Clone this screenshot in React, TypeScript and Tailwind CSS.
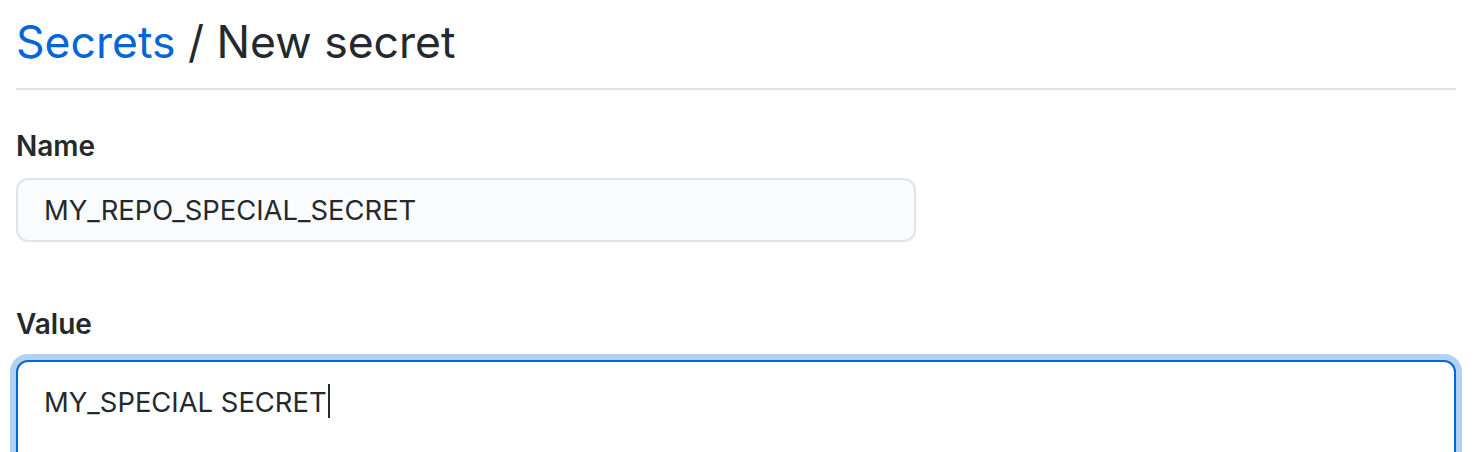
export default function App() {
  return (
    <main className="min-h-screen bg-white text-[#24292e] font-['Inter','Liberation_Sans',sans-serif] overflow-hidden">
      <div className="ml-4 w-[1440px]">
        <div className="pt-[12px] pb-[16px] border-b-2 border-[#e1e4e8]">
          <h1 className="text-[44.5px] leading-[60px] font-normal">
            <a className="text-[#0366d6]">Secrets</a> / New secret
          </h1>
        </div>

        <div className="mt-[38px]">
          <label className="block text-[28px] leading-[36px] font-semibold">Name</label>
          <input
            readOnly
            value="MY_REPO_SPECIAL_SECRET"
            className="mt-[14px] block w-[900px] h-[64px] rounded-[12px] border-2 border-[#e1e4e8] bg-[#fafbfc] px-[26px] text-[27.4px] text-[#24292e] outline-none"
          />
        </div>

        <div className="mt-[64px]">
          <label className="block text-[28px] leading-[36px] font-semibold">Value</label>
          <div className="mt-[18px] h-[200px] rounded-[12px] border-2 border-[#0366d6] bg-white px-[26px] pt-[20px] shadow-[0_0_0_6px_rgba(3,102,214,0.3)]">
            <span className="text-[27.4px] leading-[40px]">MY_SPECIAL SECRET</span>
            <span className="inline-block w-[2px] h-[34px] bg-[#24292e] align-[-6px] ml-[1px]" />
          </div>
        </div>
      </div>
    </main>
  );
}
